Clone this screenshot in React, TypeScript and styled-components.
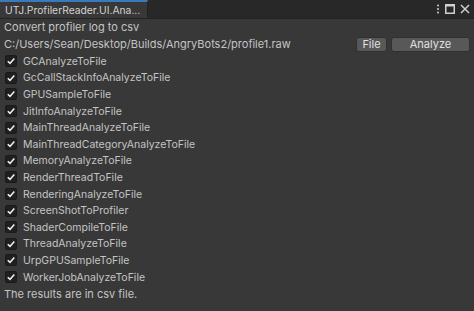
import React from "react";
import styled, { createGlobalStyle } from "styled-components";

const GlobalStyle = createGlobalStyle`
    html, body {
        margin: 0;
        padding: 0;
        background: #383838;
    }
    body {
        font-family: Inter, "Noto Sans", "Liberation Sans", sans-serif;
    }
`;

const Window = styled.div`
    width: 474px;
    height: 311px;
    display: flex;
    flex-direction: column;
    background: #383838;
    color: #c4c4c4;
    font-size: 11px;
    overflow: hidden;
`;

const TabBar = styled.div`
    height: 18px;
    display: flex;
    align-items: stretch;
    background: #282828;
    border-bottom: 1px solid #232323;
`;

const Tab = styled.div`
    flex: none;
    width: 148px;
    padding: 0 0 0 5px;
    display: flex;
    align-items: center;
    background: #383838;
    border-top: 2px solid #3a79bb;
    border-right: 1px solid #232323;
    font-size: 10.3px;
    color: #d2d2d2;
    white-space: nowrap;
    overflow: hidden;
    box-sizing: border-box;
`;

const TabSpacer = styled.div`
    flex: 1;
`;

const TabIcons = styled.div`
    display: flex;
    align-items: center;
    gap: 5px;
    padding-right: 4px;
`;

const Content = styled.div`
    flex: 1;
    display: flex;
    flex-direction: column;
    padding: 0 4px;
`;

const Label = styled.div`
    height: 16px;
    display: flex;
    align-items: center;
    white-space: nowrap;
`;

const PathRow = styled.div`
    height: 18px;
    display: flex;
    align-items: center;
    gap: 4px;
`;

const PathText = styled.div`
    flex: 1;
    white-space: nowrap;
`;

const Button = styled.button<{ wide?: boolean }>`
    height: 15px;
    width: ${(p) => (p.wide ? "79px" : "31px")};
    padding: 0;
    border: 1px solid #303030;
    border-radius: 3px;
    background: #585858;
    color: #e0e0e0;
    font-family: inherit;
    font-size: 11px;
    line-height: 13px;
`;

const CheckRow = styled.label`
    height: 16.6px;
    display: flex;
    align-items: center;
    gap: 6px;
    padding-left: 1px;
    font-size: 10.5px;
    white-space: nowrap;
`;

const Box = styled.span`
    width: 12px;
    height: 12px;
    border-radius: 2px;
    background: #202020;
    border: 1px solid #1a1a1a;
    box-sizing: border-box;
    display: flex;
    align-items: center;
    justify-content: center;
`;

const Footer = styled.div`
    height: 18px;
    display: flex;
    align-items: center;
`;

const items = [
    "GCAnalyzeToFile",
    "GcCallStackInfoAnalyzeToFile",
    "GPUSampleToFile",
    "JitInfoAnalyzeToFile",
    "MainThreadAnalyzeToFile",
    "MainThreadCategoryAnalyzeToFile",
    "MemoryAnalyzeToFile",
    "RenderThreadToFile",
    "RenderingAnalyzeToFile",
    "ScreenShotToProfiler",
    "ShaderCompileToFile",
    "ThreadAnalyzeToFile",
    "UrpGPUSampleToFile",
    "WorkerJobAnalyzeToFile",
];

const Check = () => (
    <svg width="10" height="10" viewBox="0 0 10 10">
        <path d="M1.8 5.2 L4 7.4 L8.3 2.4" fill="none" stroke="#f0f0f0" strokeWidth="1.6" />
    </svg>
);

const App: React.FC = () => {
    return (
        <Window>
            <GlobalStyle />
            <TabBar>
                <Tab>UTJ.ProfilerReader.UI.Ana...</Tab>
                <TabSpacer />
                <TabIcons>
                    <svg width="4" height="10" viewBox="0 0 4 10">
                        <circle cx="2" cy="1.5" r="1" fill="#d0d0d0" />
                        <circle cx="2" cy="5" r="1" fill="#d0d0d0" />
                        <circle cx="2" cy="8.5" r="1" fill="#d0d0d0" />
                    </svg>
                    <svg width="10" height="10" viewBox="0 0 10 10">
                        <rect x="0.75" y="0.75" width="8.5" height="8.5" fill="none" stroke="#d0d0d0" strokeWidth="1.5" />
                        <rect x="0.5" y="0.5" width="9" height="2" fill="#d0d0d0" />
                    </svg>
                    <svg width="10" height="10" viewBox="0 0 10 10">
                        <path d="M1 1 L9 9 M9 1 L1 9" stroke="#d0d0d0" strokeWidth="1.5" />
                    </svg>
                </TabIcons>
            </TabBar>
            <Content>
                <Label>Convert profiler log to csv</Label>
                <PathRow>
                    <PathText>C:/Users/Sean/Desktop/Builds/AngryBots2/profile1.raw</PathText>
                    <Button>File</Button>
                    <Button wide>Analyze</Button>
                </PathRow>
                {items.map((name) => (
                    <CheckRow key={name}>
                        <Box>
                            <Check />
                        </Box>
                        {name}
                    </CheckRow>
                ))}
                <Footer>The results are in csv file.</Footer>
            </Content>
        </Window>
    );
};

export default App;
